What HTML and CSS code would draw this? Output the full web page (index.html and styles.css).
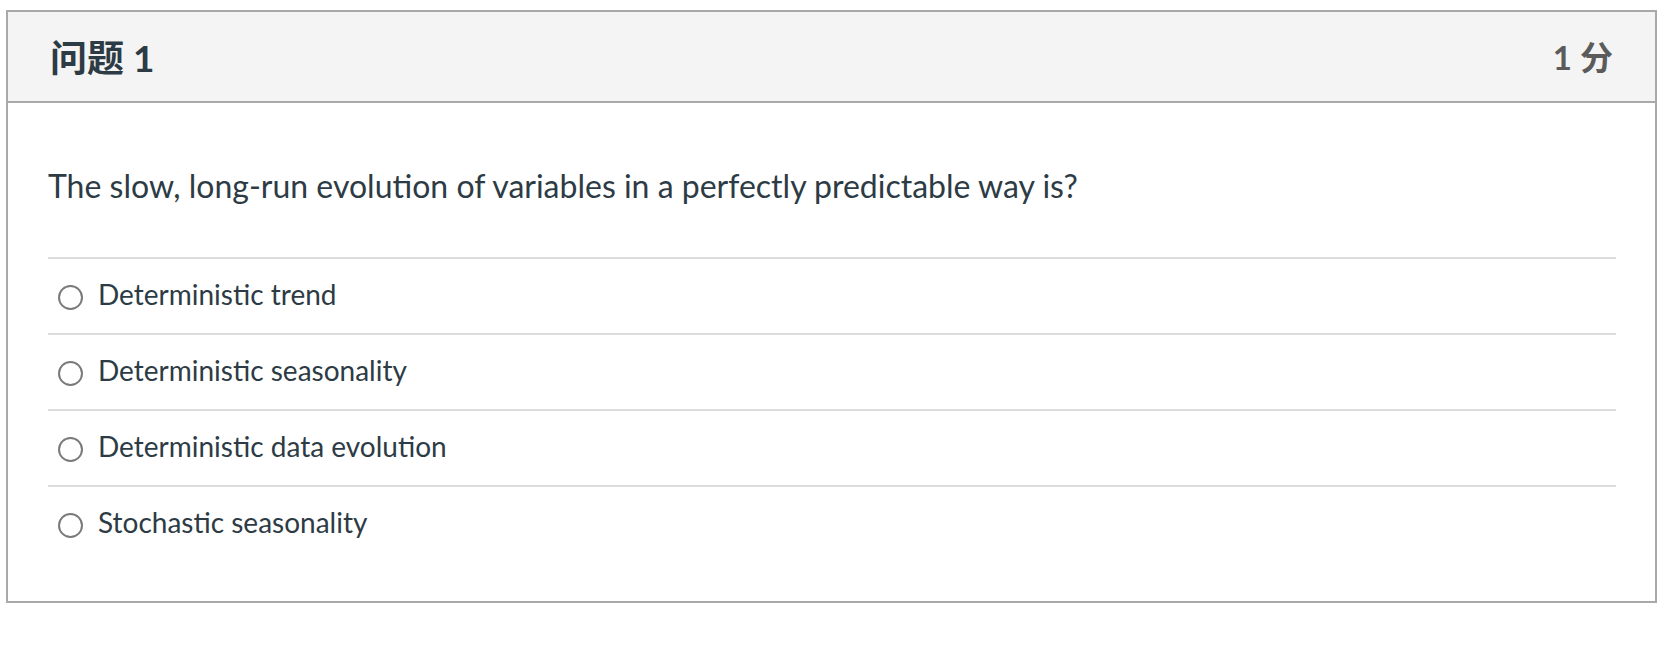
FILE: index.html
```html
<!DOCTYPE html>
<html lang="zh">
<head>
<meta charset="utf-8">
<title>问题 1</title>
<link rel="stylesheet" href="styles.css">
</head>
<body>
<div class="question">
  <div class="q-header">
    <h2 class="q-title">问题 1</h2>
    <div class="q-points">1 分</div>
  </div>
  <div class="q-body">
    <p class="q-text">The slow, long-run evolution of variables in a perfectly predictable way is?</p>
    <div class="answers">
      <label class="answer"><span class="radio"></span><span class="answer-text">Deterministic trend</span></label>
      <label class="answer"><span class="radio"></span><span class="answer-text">Deterministic seasonality</span></label>
      <label class="answer"><span class="radio"></span><span class="answer-text">Deterministic data evolution</span></label>
      <label class="answer"><span class="radio"></span><span class="answer-text">Stochastic seasonality</span></label>
    </div>
  </div>
</div>
</body>
</html>
```

FILE: styles.css
```css
html, body {
  margin: 0;
  padding: 0;
  background: #ffffff;
}

body {
  font-family: "Lato", "Noto Sans CJK SC", sans-serif;
  color: #2d3b45;
}

.question {
  margin: 10px 3px 0 6px;
  border: 2px solid #a9a9a9;
}

.q-header {
  height: 85px;
  box-sizing: content-box;
  padding: 4px 42px 0 42px;
  background: #f4f4f4;
  border-bottom: 2px solid #a9a9a9;
  display: flex;
  align-items: center;
  justify-content: space-between;
}

.q-title {
  margin: 0;
  font-size: 37px;
  font-weight: 700;
  line-height: 1.2;
  color: #2d3b45;
}

.q-points {
  font-size: 33px;
  font-weight: 700;
  line-height: 1.2;
  color: #5b5b5b;
  margin-top: -2px;
}

.q-body {
  padding: 64px 39px 40px 40px;
}

.q-text {
  margin: 0 0 52px 0;
  font-size: 32px;
  line-height: 1.2;
}

.answers {
  display: flex;
  flex-direction: column;
}

.answer {
  height: 74px;
  box-sizing: content-box;
  border-top: 2px solid #dcdcdc;
  display: flex;
  align-items: center;
  gap: 15px;
  padding-left: 10px;
}

.radio {
  width: 25px;
  height: 25px;
  box-sizing: border-box;
  border: 2px solid #7a7a7a;
  border-radius: 50%;
  background: #ffffff;
  flex: none;
  margin-top: 2px;
}

.answer-text {
  font-size: 28px;
  line-height: 1.2;
  color: #2d3b45;
  margin-bottom: 3px;
}
```
